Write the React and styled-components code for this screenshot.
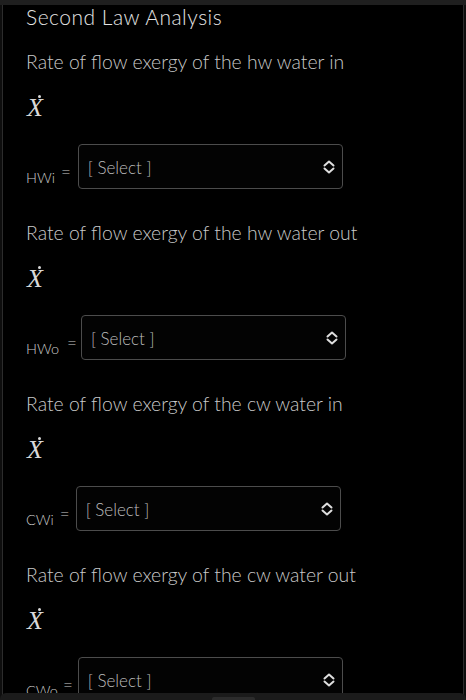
import React from "react";
import styled, { createGlobalStyle } from "styled-components";

const Global = createGlobalStyle`
  html, body {
    margin: 0;
    padding: 0;
    background: #0e0e0e;
    overflow: hidden;
  }
  body {
    font-family: Lato, "Open Sans", sans-serif;
  }
`;

const Screen = styled.div`
  min-height: 700px;
  display: flex;
  flex-direction: column;
`;

const TopStrip = styled.div`
  height: 5px;
  background: #1f1f1f;
`;

const Card = styled.div`
  margin: 0 2px;
  border-left: 1px solid #2c2c2c;
  border-right: 1px solid #2c2c2c;
  background: #000;
  padding: 0 0 40px 23px;
  flex: 1;
`;

const Title = styled.h2`
  margin: 0;
  font-family: Lato, sans-serif;
  font-weight: 300;
  font-size: 21px;
  line-height: 24px;
  color: #e4e4e4;
  letter-spacing: 0.5px;
`;

const Question = styled.section`
  padding-top: ${(p) => (p.$first ? "21px" : "32px")};
`;

const Prompt = styled.p`
  margin: 0;
  font-family: Lato, sans-serif;
  font-weight: 300;
  font-size: 19.4px;
  line-height: 23px;
  color: #c9c9c9;
`;

const MathLine = styled.div`
  margin-top: 20px;
  height: 30px;
  line-height: 30px;
`;

// X with a dot accent, as a rate quantity
const DotX = styled.span`
  position: relative;
  display: inline-block;
  font-family: "Liberation Serif", "DejaVu Serif", serif;
  font-style: italic;
  font-size: 26px;
  color: #d8d8d8;
  padding-left: 1px;

  &::before {
    content: "";
    position: absolute;
    left: 12px;
    top: 2px;
    width: 3px;
    height: 3px;
    border-radius: 50%;
    background: #d8d8d8;
  }
`;

const AnswerRow = styled.div`
  margin-top: 21px;
  display: flex;
  align-items: flex-end;
`;

const Sub = styled.span`
  font-weight: 300;
  font-size: 14.5px;
  line-height: 14px;
  color: #c9c9c9;
  margin-bottom: 4px;
  margin-right: ${(p) => p.$gap}px;
`;

const Equals = styled.span`
  font-weight: 300;
  font-size: 17px;
  line-height: 17px;
  color: #c9c9c9;
  margin-bottom: 9px;
  margin-right: ${(p) => p.$gap}px;
`;

const SelectBox = styled.div`
  width: 265px;
  height: 45px;
  box-sizing: border-box;
  border: 1px solid #4c4c4c;
  border-radius: 4px;
  background: #030303;
  display: flex;
  align-items: center;
  justify-content: space-between;
  padding: 0 7px 0 9px;
`;

const Placeholder = styled.span`
  font-family: Lato, sans-serif;
  font-weight: 300;
  font-size: 17px;
  color: #bdbdbd;
  margin-top: 2px;
`;

const Chevrons = () => (
  <svg width="12" height="14" viewBox="0 0 12 14" fill="none">
    <polyline
      points="1.5,5.5 6,1.5 10.5,5.5"
      stroke="#dedede"
      strokeWidth="2"
      strokeLinecap="round"
      strokeLinejoin="round"
    />
    <polyline
      points="1.5,8.5 6,12.5 10.5,8.5"
      stroke="#dedede"
      strokeWidth="2"
      strokeLinecap="round"
      strokeLinejoin="round"
    />
  </svg>
);

const BottomSheet = styled.div`
  position: fixed;
  left: 0;
  right: 0;
  bottom: 0;
  height: 7px;
  background: #1b1b1b;
  border-radius: 6px 6px 0 0;
  display: flex;
  justify-content: center;
  align-items: flex-end;
`;

const Handle = styled.div`
  width: 43px;
  height: 3px;
  background: #2c2c2c;
  border-radius: 2px 2px 0 0;
`;

const questions = [
  { prompt: "Rate of flow exergy of the hw water in", sub: "HWi", a: 6, b: 7 },
  { prompt: "Rate of flow exergy of the hw water out", sub: "HWo", a: 8, b: 4 },
  { prompt: "Rate of flow exergy of the cw water in", sub: "CWi", a: 6, b: 6 },
  { prompt: "Rate of flow exergy of the cw water out", sub: "CWo", a: 5, b: 5 },
];

export default function App() {
  return (
    <Screen>
      <Global />
      <TopStrip />
      <Card>
        <Title>Second Law Analysis</Title>
        {questions.map((q, i) => (
          <Question key={q.sub} $first={i === 0}>
            <Prompt>{q.prompt}</Prompt>
            <MathLine>
              <DotX>X</DotX>
            </MathLine>
            <AnswerRow>
              <Sub $gap={q.a}>{q.sub}</Sub>
              <Equals $gap={q.b}>=</Equals>
              <SelectBox>
                <Placeholder>[ Select ]</Placeholder>
                <Chevrons />
              </SelectBox>
            </AnswerRow>
          </Question>
        ))}
      </Card>
      <BottomSheet>
        <Handle />
      </BottomSheet>
    </Screen>
  );
}
